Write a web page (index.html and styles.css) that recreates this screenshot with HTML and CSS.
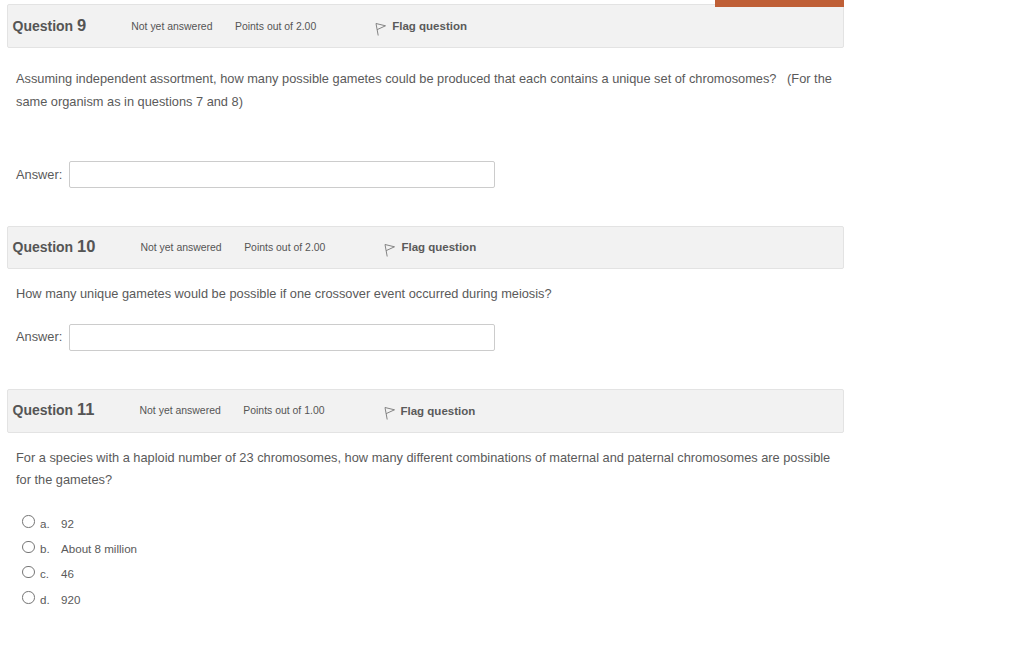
FILE: index.html
```html
<!DOCTYPE html>
<html lang="en">
<head>
<meta charset="utf-8">
<title>Quiz</title>
<link rel="stylesheet" href="styles.css">
</head>
<body>
<div class="topbar"></div>
<main class="quiz">
  <section class="question q9">
    <header class="qhead">
      <h3 class="qno">Question <span class="num">9</span></h3>
      <span class="meta state">Not yet answered</span>
      <span class="meta points">Points out of 2.00</span>
      <span class="flag"><svg class="flagicon" viewBox="0 0 12 14" width="12" height="14"><path d="M1 1.5 L3.2 13.5 M1 1.5 L10.5 3.8 L2.2 7.6" fill="none" stroke="#777" stroke-width="0.9"/></svg>Flag question</span>
    </header>
    <p class="qtext">Assuming independent assortment, how many possible gametes could be produced that each contains a unique set of chromosomes?&nbsp;&nbsp; (For the same organism as in questions 7 and 8)</p>
    <div class="answer"><label class="alabel">Answer:</label><div class="ainput"></div></div>
  </section>
  <section class="question q10">
    <header class="qhead">
      <h3 class="qno">Question <span class="num">10</span></h3>
      <span class="meta state">Not yet answered</span>
      <span class="meta points">Points out of 2.00</span>
      <span class="flag"><svg class="flagicon" viewBox="0 0 12 14" width="12" height="14"><path d="M1 1.5 L3.2 13.5 M1 1.5 L10.5 3.8 L2.2 7.6" fill="none" stroke="#777" stroke-width="0.9"/></svg>Flag question</span>
    </header>
    <p class="qtext">How many unique gametes would be possible if one crossover event occurred during meiosis?</p>
    <div class="answer"><label class="alabel">Answer:</label><div class="ainput"></div></div>
  </section>
  <section class="question q11">
    <header class="qhead">
      <h3 class="qno">Question <span class="num">11</span></h3>
      <span class="meta state">Not yet answered</span>
      <span class="meta points">Points out of 1.00</span>
      <span class="flag"><svg class="flagicon" viewBox="0 0 12 14" width="12" height="14"><path d="M1 1.5 L3.2 13.5 M1 1.5 L10.5 3.8 L2.2 7.6" fill="none" stroke="#777" stroke-width="0.9"/></svg>Flag question</span>
    </header>
    <p class="qtext">For a species with a haploid number of 23 chromosomes, how many different combinations of maternal and paternal chromosomes are possible for the gametes?</p>
    <ul class="options">
      <li class="opt"><span class="radio"></span><span class="letter">a.</span><span>92</span></li>
      <li class="opt"><span class="radio"></span><span class="letter">b.</span><span>About 8 million</span></li>
      <li class="opt"><span class="radio"></span><span class="letter">c.</span><span>46</span></li>
      <li class="opt"><span class="radio"></span><span class="letter">d.</span><span>920</span></li>
    </ul>
  </section>
</main>
</body>
</html>
```
FILE: styles.css
```css
* { box-sizing: border-box; }
html, body { margin: 0; padding: 0; background: #fff; }
body {
  width: 1024px;
  height: 658px;
  overflow: hidden;
  font-family: "Liberation Sans", Arial, sans-serif;
  color: #5a5a5a;
  font-size: 12.8px;
  position: relative;
}
.topbar {
  position: absolute;
  left: 715px;
  top: 0;
  width: 129px;
  height: 7px;
  background: #bf5f36;
}
.quiz { width: 837px; margin-left: 7px; padding-top: 4px; }
.qhead {
  display: flex;
  align-items: center;
  height: 44px;
  padding-left: 4.5px;
  background: #f2f2f2;
  border: 1px solid #e3e3e3;
  border-radius: 2px;
  white-space: nowrap;
}
.qno { margin: -2px 0 0; font-size: 14px; font-weight: 700; color: #555; }
.num { font-size: 16.5px; }
.meta { font-size: 10.45px; color: #555; }
.state { margin-left: 45px; }
.points { margin-left: 22.5px; }
.flag {
  display: flex;
  align-items: center;
  margin-left: 59px;
  font-size: 11.5px;
  font-weight: 700;
  color: #5a5a5a;
}
.flagicon { margin: 5px 5px 0 0; }
.qtext {
  margin: 0;
  padding-left: 9px;
  line-height: 22.5px;
}
.answer { display: flex; align-items: center; padding-left: 9px; }
.alabel { width: 53px; margin-top: -1px; }
.ainput {
  width: 426px;
  height: 27px;
  background: #fff;
  border: 1px solid #ccc;
  border-radius: 2px;
}
.q9 .qtext { margin-top: 20px; }
.q9 .answer { margin-top: 48px; }
.q10 { margin-top: 37.5px; }
.q10 .qhead { height: 43.5px; }
.q10 .qtext { margin-top: 14px; }
.q10 .answer { margin-top: 18px; }
.q11 { margin-top: 38px; }
.q11 .qtext { margin-top: 14px; }
.options { list-style: none; margin: 19px 0 0; padding: 0 0 0 15px; }
.opt { display: flex; align-items: center; height: 25.3px; font-size: 11.6px; }
.radio {
  width: 12.5px;
  height: 12.5px;
  border: 1px solid #767676;
  border-radius: 50%;
  background: #fff;
  margin-right: 5.5px;
  margin-top: -1px;
  margin-bottom: 2px;
}
.letter { width: 21px; }
```
